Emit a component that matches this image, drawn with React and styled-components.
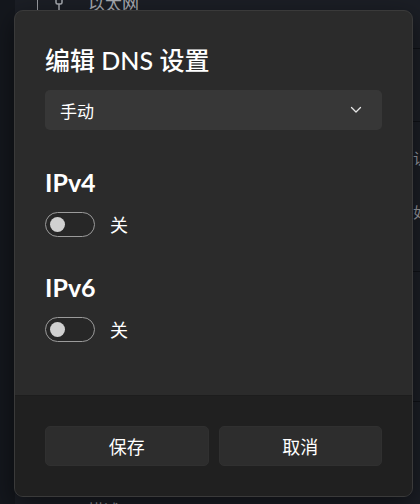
import React from "react";
import styled, { createGlobalStyle } from "styled-components";

const Global = createGlobalStyle`
  html, body { margin: 0; padding: 0; background: #14171d; }
  body { width: 420px; height: 504px; overflow: hidden;
    font-family: "Segoe UI", "Noto Sans", "Noto Sans CJK SC", sans-serif; }
  * { box-sizing: border-box; }
`;

const Page = styled.div`
  position: relative;
  width: 420px;
  height: 504px;
  overflow: hidden;
  display: flex;
  background: #14171d;
`;

const Rail = styled.div`
  width: 15px;
  flex: none;
  background: #14171d;
`;

const Settings = styled.div`
  flex: 1;
  background: #1b1e25;
  display: flex;
  flex-direction: column;
  position: relative;
`;

const TopItem = styled.div`
  height: 49px;
  display: flex;
  align-items: flex-start;
  border-bottom: 1px solid #0f1116;
  font-size: 17px;
`;

const Connector = styled.div`
  width: 1px;
  height: 12px;
  background: #9a9ca2;
  margin-left: 22px;
`;

const Plug = styled.svg`
  margin-left: 16px;
  margin-top: -2px;
`;

const TopLabel = styled.span`
  margin-left: 24px;
  margin-top: -10px;
  font-family: "Noto Sans CJK SC", sans-serif;
  color: #a7aab0;
`;

const Row = styled.div`
  height: ${(p) => p.h}px;
  border-bottom: 1px solid #0f1116;
  position: relative;
`;

const Frag = styled.span`
  position: absolute;
  left: 398px;
  top: ${(p) => p.t}px;
  font-family: "Noto Sans CJK SC", sans-serif;
  font-size: 15px;
  color: #9a9da4;
  white-space: nowrap;
`;

const Dialog = styled.div`
  position: absolute;
  left: 14px;
  top: 10px;
  width: 399px;
  height: 487px;
  border: 1px solid #3a3a3a;
  border-radius: 9px;
  overflow: hidden;
  display: flex;
  flex-direction: column;
  background: #2b2b2b;
  box-shadow: 0 8px 24px rgba(0, 0, 0, 0.5);
`;

const Body = styled.div`
  flex: 1;
  padding: 29px 30px 0 30px;
  display: flex;
  flex-direction: column;
`;

const Title = styled.h1`
  margin: 0;
  font-size: 25px;
  font-weight: 500;
  color: #ffffff;
  line-height: 40px;
  font-family: "Lato", "Noto Sans CJK SC", sans-serif;
`;

const Select = styled.div`
  margin-top: 10px;
  height: 40px;
  border-radius: 5px;
  background: #373737;
  display: flex;
  align-items: center;
  justify-content: space-between;
  padding: 0 20px 0 15px;
  color: #ffffff;
  font-family: "Noto Sans CJK SC", sans-serif;
  font-size: 17px;
`;

const Section = styled.div`
  margin-top: ${(p) => p.mt}px;
  display: flex;
  flex-direction: column;
`;

const Heading = styled.div`
  font-size: 25px;
  font-weight: 700;
  color: #ffffff;
  line-height: 30px;
  font-family: "Lato", sans-serif;
`;

const ToggleRow = styled.div`
  margin-top: 14px;
  display: flex;
  align-items: center;
  gap: 15px;
  color: #ffffff;
  font-family: "Noto Sans CJK SC", sans-serif;
  font-size: 18px;
`;

const Track = styled.div`
  width: 50px;
  height: 25px;
  border: 1px solid #9b9b9b;
  border-radius: 13px;
  background: #272727;
  display: flex;
  align-items: center;
  padding-left: 4px;
`;

const Knob = styled.div`
  width: 15px;
  height: 15px;
  border-radius: 50%;
  background: #d0d0d0;
`;

const Footer = styled.div`
  height: 101px;
  flex: none;
  background: #202020;
  border-top: 1px solid #1d1d1d;
  display: grid;
  grid-template-columns: 1fr 1fr;
  gap: 10px;
  padding: 30px 30px 0 30px;
  align-content: start;
`;

const Button = styled.div`
  height: 40px;
  border-radius: 5px;
  background: #2d2d2d;
  border: 1px solid #303030;
  display: flex;
  align-items: center;
  justify-content: center;
  color: #ffffff;
  font-family: "Noto Sans CJK SC", sans-serif;
  font-size: 18px;
`;

const BottomText = styled.span`
  position: absolute;
  left: ${(p) => p.l}px;
  top: 497px;
  font-family: "Noto Sans CJK SC", sans-serif;
  font-size: 16px;
  color: #9a9da4;
`;

function Toggle({ label }) {
  return (
    <ToggleRow>
      <Track>
        <Knob />
      </Track>
      {label}
    </ToggleRow>
  );
}

export default function App() {
  return (
    <>
      <Global />
      <Page>
        <Rail />
        <Settings>
          <TopItem>
            <Connector />
            <Plug width="10" height="12" viewBox="0 0 10 12">
              <rect x="2" y="0" width="6" height="6" rx="1.5" fill="none" stroke="#a7aab0" strokeWidth="1.5" />
              <line x1="5" y1="6" x2="5" y2="12" stroke="#a7aab0" strokeWidth="1.5" />
            </Plug>
            <TopLabel>以太网</TopLabel>
          </TopItem>
          <Row h={73} />
          <Row h={150}>
            <Frag t={25}>认证</Frag>
            <Frag t={79}>如果</Frag>
          </Row>
          <Row h={130} />
          <BottomText l={73}>描述</BottomText>
          <BottomText l={396}>AF</BottomText>
        </Settings>
        <Dialog>
          <Body>
            <Title>编辑 DNS 设置</Title>
            <Select>
              <span>手动</span>
              <svg width="12" height="8" viewBox="0 0 12 8">
                <path d="M1.5 1.5 L6 6 L10.5 1.5" fill="none" stroke="#e6e6e6" strokeWidth="1.3" strokeLinecap="round" strokeLinejoin="round" />
              </svg>
            </Select>
            <Section mt={37}>
              <Heading>IPv4</Heading>
              <Toggle label="关" />
            </Section>
            <Section mt={35}>
              <Heading>IPv6</Heading>
              <Toggle label="关" />
            </Section>
          </Body>
          <Footer>
            <Button>保存</Button>
            <Button>取消</Button>
          </Footer>
        </Dialog>
      </Page>
    </>
  );
}
